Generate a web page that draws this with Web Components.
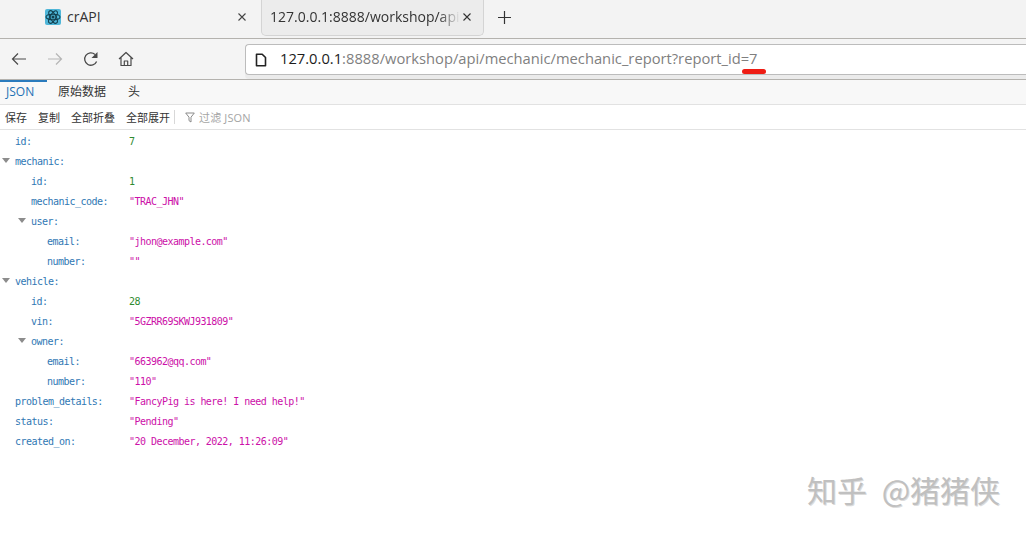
<!DOCTYPE html>
<html>
<head>
<meta charset="utf-8">
<title>mechanic_report</title>
<style>
	html, body { margin: 0; padding: 0; background: #fff; }
	body { width: 1026px; height: 533px; overflow: hidden; font-family: "Open Sans", "Noto Sans CJK SC", sans-serif; position: relative; }
</style>
</head>
<body>
<browser-chrome url-host="127.0.0.1" url-rest=":8888/workshop/api/mechanic/mechanic_report?report_id=7"></browser-chrome>
<viewer-tabs></viewer-tabs>
<viewer-toolbar></viewer-toolbar>
<json-tree>
	<json-row name="id" level="0" type="num">7</json-row>
	<json-row name="mechanic" level="0" open></json-row>
	<json-row name="id" level="1" type="num">1</json-row>
	<json-row name="mechanic_code" level="1">"TRAC_JHN"</json-row>
	<json-row name="user" level="1" open></json-row>
	<json-row name="email" level="2">"jhon@example.com"</json-row>
	<json-row name="number" level="2">""</json-row>
	<json-row name="vehicle" level="0" open></json-row>
	<json-row name="id" level="1" type="num">28</json-row>
	<json-row name="vin" level="1">"5GZRR69SKWJ931809"</json-row>
	<json-row name="owner" level="1" open></json-row>
	<json-row name="email" level="2">"663962@qq.com"</json-row>
	<json-row name="number" level="2">"110"</json-row>
	<json-row name="problem_details" level="0">"FancyPig is here! I need help!"</json-row>
	<json-row name="status" level="0">"Pending"</json-row>
	<json-row name="created_on" level="0">"20 December, 2022, 11:26:09"</json-row>
</json-tree>
<water-mark>知乎 @猪猪侠</water-mark>

<script>
(function() {
	"use strict";

	const UI_FONT = '"Open Sans", "Noto Sans CJK SC", sans-serif';

	class BrowserChrome extends HTMLElement {
		connectedCallback() {
			const host = this.getAttribute("url-host");
			const rest = this.getAttribute("url-rest");
			this.attachShadow({ mode: "open" }).innerHTML = `
			<style>
				:host { display: block; font-family: ${UI_FONT}; color: #333; }
				.tabs { height: 38px; background: #f3f3f3; border-bottom: 1px solid #b4b2ae; display: flex; }
				.tab { box-sizing: border-box; height: 36px; padding-bottom: 2px; display: flex; align-items: center; font-size: 14px; white-space: nowrap; }
				.tab.first { width: 261px; padding-left: 45px; }
				.tab.first .title { margin: -1px 0 0 6px; flex: 1; }
				.tab.first svg.x { margin-right: 14px; }
				.tab.active { width: 223px; padding: 0 11px 2px 8px; background: #ececec; border: 1px solid #d4d4d4; border-top: 0; border-radius: 0 0 5px 5px; }
				.tab.active .title { flex: 1; overflow: hidden; -webkit-mask-image: linear-gradient(90deg, #000 88%, transparent 99%); mask-image: linear-gradient(90deg, #000 88%, transparent 99%); }
				.plus { margin: 11px 0 0 14px; }
				.nav { height: 40px; background: #f4f4f4; border-bottom: 1px solid #b4b2ae; display: flex; align-items: center; box-sizing: content-box; }
				.btn { display: block; flex: none; }
				.url { box-sizing: border-box; flex: 1; height: 31px; margin: 5px 0 0 0; align-self: flex-start; background: #fff; border: 1px solid #bcbcbc; border-right: 0; border-radius: 4px 0 0 4px; box-shadow: 0 4px 0 #ebebeb; display: flex; align-items: center; padding: 0 0 3px 9px; font-size: 14.72px; color: #7f7f7f; white-space: nowrap; position: relative; }
				.url b { font-weight: 400; color: #1c1c1c; }
				.url .page { margin-right: 13px; margin-top: 3px; }
				.mark { position: absolute; left: 496px; top: 24px; width: 24px; height: 5px; border-radius: 3px; background: #ee1c14; }
			</style>
			<div class="tabs">
				<div class="tab first">
					<svg width="16" height="16" viewBox="0 0 16 16">
						<rect width="16" height="16" rx="2" fill="#4fb6d8"/>
						<g fill="none" stroke="#12404f" stroke-width="1.1">
							<ellipse cx="8" cy="8" rx="7" ry="2.8"/>
							<ellipse cx="8" cy="8" rx="7" ry="2.8" transform="rotate(60 8 8)"/>
							<ellipse cx="8" cy="8" rx="7" ry="2.8" transform="rotate(120 8 8)"/>
						</g>
						<circle cx="8" cy="8" r="1.5" fill="#12404f"/>
					</svg>
					<span class="title">crAPI</span>
					<svg class="x" width="10" height="10" viewBox="0 0 10 10"><path d="M1.5 1.5l7 7M8.5 1.5l-7 7" stroke="#444" stroke-width="1.1" fill="none"/></svg>
				</div>
				<div class="tab active">
					<span class="title">127.0.0.1:8888/workshop/api</span>
					<svg width="10" height="10" viewBox="0 0 10 10"><path d="M1.5 1.5l7 7M8.5 1.5l-7 7" stroke="#333" stroke-width="1.1" fill="none"/></svg>
				</div>
				<svg class="plus" width="13" height="13" viewBox="0 0 13 13"><path d="M6.5 0v13M0 6.5h13" stroke="#333" stroke-width="1.2" fill="none"/></svg>
			</div>
			<div class="nav">
				<svg class="btn" style="margin-left:11px" width="16" height="14" viewBox="0 0 16 14"><path d="M15 7H1.5M7 1.5L1.5 7 7 12.5" stroke="#4a4a4a" stroke-width="1.2" fill="none"/></svg>
				<svg class="btn" style="margin-left:20px" width="16" height="14" viewBox="0 0 16 14"><path d="M1 7h13.5M9 1.5L14.5 7 9 12.5" stroke="#b5b5b5" stroke-width="1.2" fill="none"/></svg>
				<svg class="btn" style="margin-left:20px" width="16" height="16" viewBox="0 0 16 16"><path d="M13.6 10.5A6.2 6.2 0 1 1 12 3.4" stroke="#4a4a4a" stroke-width="1.3" fill="none"/><path d="M14.5 1v6h-6z" fill="#4a4a4a"/></svg>
				<svg class="btn" style="margin-left:19px" width="16" height="16" viewBox="0 0 16 16"><path d="M1 8l7-6.5L15 8M3 6.5V14.5h10V6.5M6.3 14.5V10h3.4v4.5" stroke="#4a4a4a" stroke-width="1.2" fill="none" stroke-linejoin="round"/></svg>
				<div class="url" style="margin-left:111px">
					<svg class="page" width="12" height="14" viewBox="0 0 12 14"><path d="M1.5 1.2h5.7l3.3 3.3v8.3h-9z" fill="#fff" stroke="#222" stroke-width="1.6" stroke-linejoin="round"/></svg>
					<span><b>${host}</b>${rest}</span>
					<span class="mark"></span>
				</div>
			</div>`;
		}
	}

	class ViewerTabs extends HTMLElement {
		connectedCallback() {
			this.attachShadow({ mode: "open" }).innerHTML = `
			<style>
				:host { display: flex; height: 25px; box-sizing: border-box; background: #f8f8f8; border-bottom: 1px solid #e2e2e2; font-family: ${UI_FONT}; font-size: 12px; color: #333; }
				span { display: block; padding: 4px 5px 0 6px; line-height: 15px; }
				.on { width: 47px; box-sizing: border-box; border-top: 2px solid #2a7bbd; padding-top: 2px; color: #1f71b4; }
				.raw { margin-left: 5px; }
				.head { margin-left: 11px; }
			</style>
			<span class="on">JSON</span><span class="raw">原始数据</span><span class="head">头</span>`;
		}
	}

	class ViewerToolbar extends HTMLElement {
		connectedCallback() {
			this.attachShadow({ mode: "open" }).innerHTML = `
			<style>
				:host { display: flex; align-items: center; height: 25px; box-sizing: border-box; background: #fff; border-bottom: 1px solid #e2e2e2; font-family: ${UI_FONT}; font-size: 11px; color: #333; padding-left: 5px; }
				span { display: block; margin-right: 11px; }
				.sep { width: 1px; height: 14px; background: #d8d8d8; margin: 0 10px 0 -7px; }
				.filter { color: #a5a5a5; margin: 0 0 0 4px; letter-spacing: 0.15px; }
			</style>
			<span>保存</span><span>复制</span><span>全部折叠</span><span>全部展开</span><i class="sep"></i>
			<svg width="10" height="11" viewBox="0 0 10 11"><path d="M.7 1h8.6L6 5.2V10L4 8.6V5.2z" fill="none" stroke="#8a8a8a" stroke-width="1"/></svg>
			<span class="filter">过滤 JSON</span>`;
		}
	}

	class JsonTree extends HTMLElement {
		constructor() {
			super();
			this.attachShadow({ mode: "open" }).innerHTML = `
			<style>
				:host { display: block; padding-top: 1px; font-family: "DejaVu Sans Mono", monospace; font-size: 10px; letter-spacing: -0.53px; }
			</style>
			<slot></slot>`;
		}
	}

	class JsonRow extends HTMLElement {
		connectedCallback() {
			const level = parseInt(this.getAttribute("level"));
			const open = this.hasAttribute("open");
			const color = this.getAttribute("type") === "num" ? "#2f8a2f" : "#cc10a8";
			this.attachShadow({ mode: "open" }).innerHTML = `
			<style>
				:host { display: grid; grid-template-columns: 129px 1fr; height: 20px; align-items: center; white-space: pre; }
				.key { color: #2f78b4; padding-left: ${15 + level * 16}px; position: relative; }
				.val { color: ${color}; }
				.tw { position: absolute; left: ${2 + level * 16}px; top: 2px; width: 0; height: 0; border: 4px solid transparent; border-top: 5px solid #8c8c8c; border-bottom: 0; }
			</style>
			<div class="key">${open ? '<i class="tw"></i>' : ""}${this.getAttribute("name")}:</div>
			<div class="val"><slot></slot></div>`;
		}
	}

	class WaterMark extends HTMLElement {
		constructor() {
			super();
			this.attachShadow({ mode: "open" }).innerHTML = `
			<style>
				:host { position: absolute; left: 807px; top: 469px; font-family: "Noto Sans CJK SC", sans-serif; font-size: 30px; word-spacing: 8px; line-height: 40px; color: #c0c0c0; text-shadow: 1px 1px 0 #dcdcdc; white-space: nowrap; }
			</style>
			<slot></slot>`;
		}
	}

	customElements.define("browser-chrome", BrowserChrome);
	customElements.define("viewer-tabs", ViewerTabs);
	customElements.define("viewer-toolbar", ViewerToolbar);
	customElements.define("json-tree", JsonTree);
	customElements.define("json-row", JsonRow);
	customElements.define("water-mark", WaterMark);
})();
</script>
</body>
</html>
